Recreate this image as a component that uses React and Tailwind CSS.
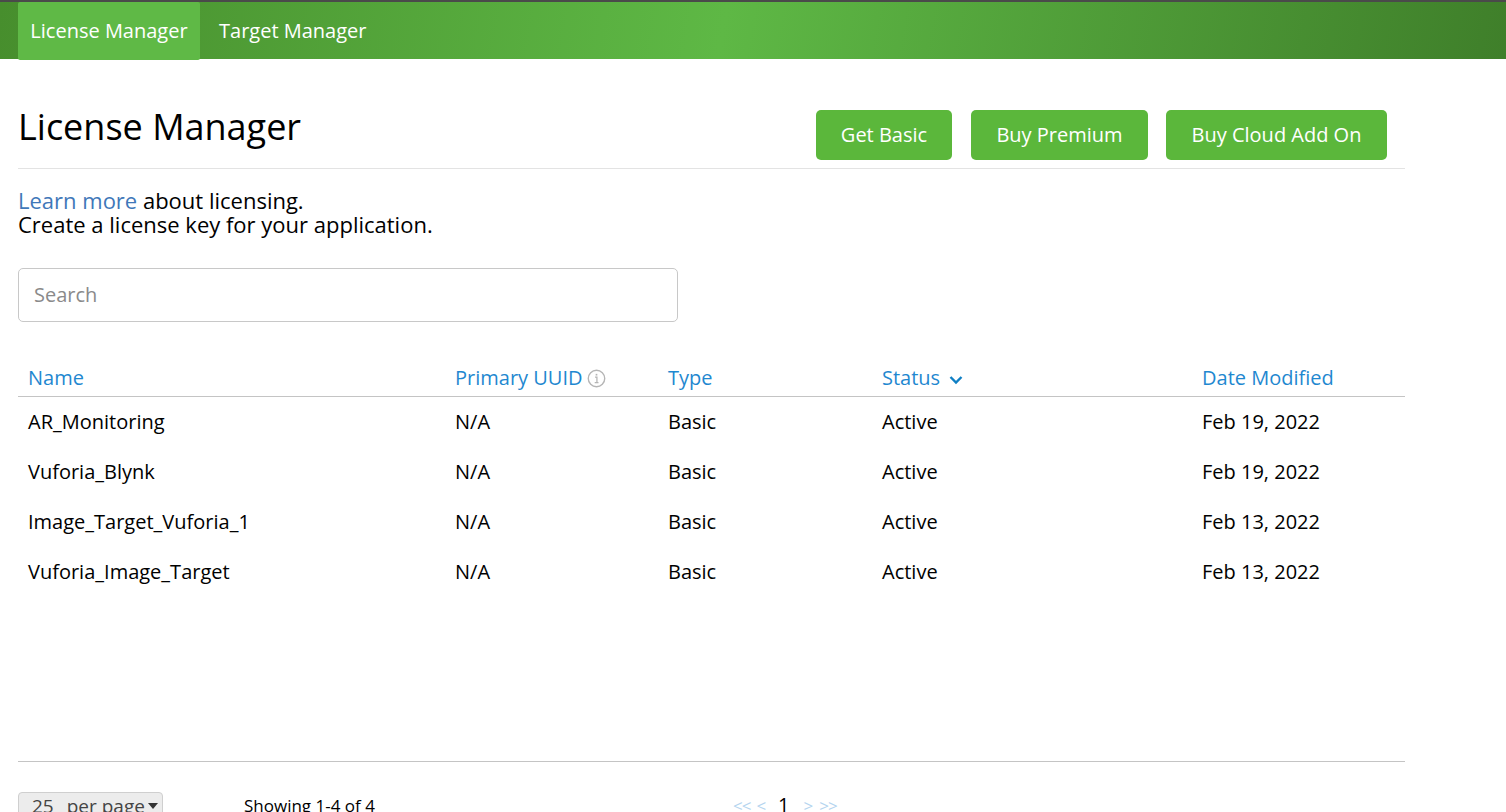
import React from 'react';

const licenses = [
  { name: 'AR_Monitoring', uuid: 'N/A', type: 'Basic', status: 'Active', date: 'Feb 19, 2022' },
  { name: 'Vuforia_Blynk', uuid: 'N/A', type: 'Basic', status: 'Active', date: 'Feb 19, 2022' },
  { name: 'Image_Target_Vuforia_1', uuid: 'N/A', type: 'Basic', status: 'Active', date: 'Feb 13, 2022' },
  { name: 'Vuforia_Image_Target', uuid: 'N/A', type: 'Basic', status: 'Active', date: 'Feb 13, 2022' },
];

const gridCols = 'grid grid-cols-[427px_213px_214px_320px_213px]';

const GreenButton = ({ children, className }) => (
  <button className={`h-[50px] rounded-[5px] bg-[#5bb73b] text-[20px] text-white ${className}`}>
    {children}
  </button>
);

const App = () => {
  return (
    <div className="h-screen overflow-hidden bg-white font-['Open_Sans',sans-serif] text-black">
      <nav className="flex h-[59px] border-t-2 border-[#4a4a4a] bg-[linear-gradient(100deg,#478e2d_0%,#5eb845_48%,#3f7f2a_100%)] pl-[18px] text-[20px] text-white">
        <a className="flex h-[58px] w-[182px] items-center justify-center rounded-[2px] bg-[#5fb946]">License Manager</a>
        <a className="flex h-[57px] items-center pl-[19px]">Target Manager</a>
      </nav>

      <main className="ml-[18px] w-[1387px]">
        <div className="flex h-[110px] items-start justify-between border-b border-[#e3e3e3] pt-[50px] pr-[18px]">
          <h1 className="text-[36px] leading-[36px] font-normal">License Manager</h1>
          <div className="mt-[1px] flex">
            <GreenButton className="w-[136px]">Get Basic</GreenButton>
            <GreenButton className="ml-[19px] w-[177px]">Buy Premium</GreenButton>
            <GreenButton className="ml-[18px] w-[221px]">Buy Cloud Add On</GreenButton>
          </div>
        </div>

        <p className="mt-[19px] text-[22px] leading-[24px]">
          <a className="text-[#3f78b9]">Learn more</a> about licensing.
          <br />
          Create a license key for your application.
        </p>

        <input
          placeholder="Search"
          className="mt-[32px] block h-[54px] w-[660px] rounded-[5px] border border-[#c8c8c8] px-[15px] pb-[2px] text-[20px] placeholder:text-[#8a8a8a]"
        />

        <div className={`${gridCols} mt-[38px] h-[37px] items-center border-b border-[#c4c4c4] text-[20px] text-[#1f88d0]`}>
          <div className="pl-[10px]">Name</div>
          <div className="flex items-center pl-[10px]">
            Primary UUID
            <svg viewBox="0 0 18 18" className="ml-[4px] h-[19px] w-[19px] text-[#b5b5b5]" fill="none" stroke="currentColor">
              <circle cx="9" cy="9" r="7.8" strokeWidth="1.3" />
              <path d="M7.6 7.8h1.8v4.8M7.3 12.8h3.6" strokeWidth="1.2" />
              <path d="M9 4.6v1.6" strokeWidth="1.6" />
            </svg>
          </div>
          <div className="pl-[10px]">Type</div>
          <div className="flex items-center pl-[10px]">
            Status
            <svg viewBox="0 0 14 10" className="ml-[9px] mt-[4px] h-[10px] w-[14px] text-[#0f7fc4]" fill="none" stroke="currentColor" strokeWidth="2.4">
              <path d="M1.5 2l5.5 5.5L12.5 2" />
            </svg>
          </div>
          <div className="pl-[10px]">Date Modified</div>
        </div>

        <div className="h-[365px] border-b border-[#c4c4c4]">
          {licenses.map((license) => (
            <div key={license.name} className={`${gridCols} h-[50px] items-center text-[20px]`}>
              <div className="pl-[10px]">{license.name}</div>
              <div className="pl-[10px]">{license.uuid}</div>
              <div className="pl-[10px]">{license.type}</div>
              <div className="pl-[10px]">{license.status}</div>
              <div className="pl-[10px]">{license.date}</div>
            </div>
          ))}
        </div>

        <div className="mt-[30px] flex items-start">
          <button className="flex h-[38px] w-[145px] items-start rounded-[4px] border border-[#cfcfcf] bg-[#ececec] pl-[13px] text-[19px] leading-[26px] text-[#444]">
            25
            <span className="ml-[13px]">per page</span>
            <span className="ml-[3px] mt-[10px] h-0 w-0 border-x-[5px] border-t-[6px] border-x-transparent border-t-[#333]" />
          </button>
          <span className="ml-[81px] pt-[1px] text-[17px]">Showing 1-4 of 4</span>
          <div className="ml-[358px] flex items-start pt-[1px] text-[17px] text-[#b5d5ef]">
            <span className="tracking-[-1px]">{'<<'}</span>
            <span className="ml-[6px]">{'<'}</span>
            <span className="ml-[12px] text-[20px] leading-[24px] text-black">1</span>
            <span className="ml-[14px]">{'>'}</span>
            <span className="ml-[6px] tracking-[-1px]">{'>>'}</span>
          </div>
        </div>
      </main>
    </div>
  );
};

export default App;
